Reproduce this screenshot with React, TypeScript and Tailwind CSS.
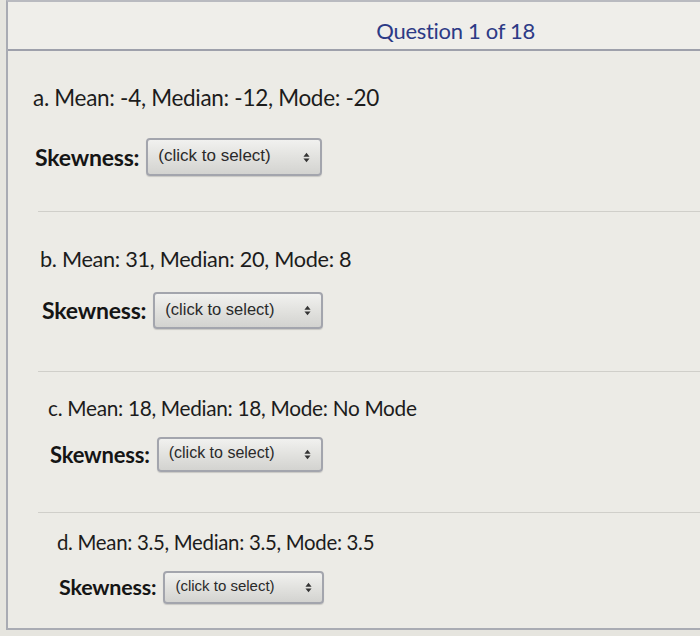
import React from "react";

type Item = {
  label: string;
  pad: string;
  text: string;
  skew: string;
  select: string;
  option: string;
  last?: boolean;
};

// sizes shrink a bit towards the bottom, like the original page
const ITEMS: Item[] = [
  {
    label: "a. Mean: -4, Median: -12, Mode: -20",
    pad: "pl-[25px] pt-[33px] pb-[35px]",
    text: "mb-[26px] text-[22.5px]",
    skew: "text-[23px]",
    select: "w-[176px] h-[38px]",
    option: "text-[17px]",
  },
  {
    label: "b. Mean: 31, Median: 20, Mode: 8",
    pad: "pl-[32px] pt-[33px] pb-[42px]",
    text: "mb-[19px] text-[21.7px]",
    skew: "text-[23px]",
    select: "w-[170px] h-[37px]",
    option: "text-[16.5px]",
  },
  {
    label: "c. Mean: 18, Median: 18, Mode: No Mode",
    pad: "pl-[40px] pt-[22px] pb-[40px]",
    text: "mb-[15px] text-[20.8px]",
    skew: "text-[22px]",
    select: "w-[166px] h-[35px]",
    option: "text-[16px]",
  },
  {
    label: "d. Mean: 3.5, Median: 3.5, Mode: 3.5",
    pad: "pl-[49px] pt-[15px] pb-[24px]",
    text: "mb-[15px] text-[20.4px]",
    skew: "text-[21.5px]",
    select: "w-[161px] h-[33px]",
    option: "text-[15px]",
    last: true,
  },
];

function Arrows() {
  return (
    <svg width="7" height="11" viewBox="0 0 8 12" className="shrink-0">
      <path d="M4 0.5 L7.5 5 L0.5 5 Z" fill="#333" />
      <path d="M4 11.5 L7.5 7 L0.5 7 Z" fill="#333" />
    </svg>
  );
}

function Select({ size, option }: { size: string; option: string }) {
  return (
    <div
      className={`${size} flex items-center justify-between pl-[10px] pr-[10px] rounded-[4px] border-2 border-[#a3a5ad] bg-gradient-to-b from-[#f1f1ef] via-[#e2e2df] to-[#d3d3d0] shadow-[0_1px_1px_rgba(0,0,0,0.15)]`}
    >
      <span className={`${option} text-[#2a2a2a] font-['Liberation_Sans',Arial,sans-serif] -mt-[3px]`}>
        (click to select)
      </span>
      <Arrows />
    </div>
  );
}

function Question({ item }: { item: Item }) {
  return (
    <div className={item.pad}>
      <p className={`${item.text} leading-[28px] text-[#1c1c1c] tracking-[-0.3px]`}>
        {item.label}
      </p>
      <div className="flex items-center gap-[7px] pl-[2px]">
        <span className={`${item.skew} font-bold text-[#151515] tracking-[-0.2px]`}>
          Skewness:
        </span>
        <Select size={item.select} option={item.option} />
      </div>
    </div>
  );
}

export default function App() {
  return (
    <div className="w-[700px] h-[636px] overflow-hidden bg-[#e6e5df] font-['Lato','Open_Sans',sans-serif]">
      <div className="ml-[6px] h-[630px] border-l-2 border-[#a9abb3] border-t-2 border-t-[#b9bac0] border-b-2 border-b-[#a9abb3] bg-[#ecebe6] flex flex-col">
        {/* header */}
        <div className="h-[50px] border-b-2 border-[#9ea0ab] flex items-center justify-end pr-[165px] bg-[#efeeea]">
          <span className="text-[22px] text-[#2c3a86] tracking-[-0.3px] mt-[10px]">
            Question 1 of 18
          </span>
        </div>

        {ITEMS.map((item, i) => (
          <div key={i}>
            <Question item={item} />
            {!item.last && (
              <div className="ml-[30px] border-t border-[#d0cfca]" />
            )}
          </div>
        ))}
      </div>
    </div>
  );
}
